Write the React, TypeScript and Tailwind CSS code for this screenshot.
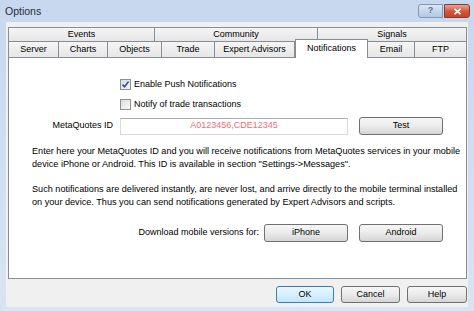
import type { ReactNode } from "react";

const TOP_ROW = [
  { label: "Events", w: "w-[147px]" },
  { label: "Community", w: "w-[163px]" },
  { label: "Signals", w: "w-[149px]" },
];

const BOTTOM_ROW = [
  { label: "Server", w: "w-[51px]" },
  { label: "Charts", w: "w-[49px]" },
  { label: "Objects", w: "w-[54px]" },
  { label: "Trade", w: "w-[53px]" },
  { label: "Expert Advisors", w: "w-[80px]" },
  { label: "Notifications", w: "w-[73px]", active: true },
  { label: "Email", w: "w-[47px]" },
  { label: "FTP", w: "w-[52px]" },
];

function Button({
  children,
  className = "",
  focused = false,
}: {
  children: ReactNode;
  className?: string;
  focused?: boolean;
}) {
  return (
    <button
      type="button"
      className={
        "flex items-center justify-center rounded-[3px] border text-[9px] text-black " +
        (focused
          ? "border-[#3c7fb1] bg-linear-to-b from-[#eaf6fd] via-[#d9f0fc] to-[#bee6fd] "
          : "border-[#707070] bg-linear-to-b from-[#f6f6f6] via-[#ebebeb] to-[#d5d5d5] ") +
        className
      }
    >
      {children}
    </button>
  );
}

function Checkbox({ checked }: { checked?: boolean }) {
  return (
    <span
      className={
        "flex h-[11px] w-[11px] items-center justify-center border border-[#8e8f8f] bg-linear-to-br " +
        (checked ? "from-[#cfdcef] to-[#f4f8fd]" : "from-[#dcdcdc] to-[#fbfbfb]")
      }
    >
      {checked ? (
        <svg viewBox="0 0 9 9" className="h-[9px] w-[9px]">
          <path
            d="M1.5 4.6 L3.6 6.8 L7.6 1.6"
            fill="none"
            stroke="#3c4f8a"
            strokeWidth="1.6"
          />
        </svg>
      ) : null}
    </span>
  );
}

export default function App() {
  return (
    <div className="flex h-[311px] w-[474px] flex-col bg-linear-to-b from-[#c7d8ee] to-[#d8e4f3] font-['Liberation_Sans',Arial,sans-serif] text-[9px] text-black">
      {/* title bar */}
      <div className="flex h-[22px] items-start pl-[5px]">
        <span className="mt-[4px] text-[10.5px] text-[#1e2c40]">Options</span>
        <div className="flex-1" />
        <div className="mt-[4px] mr-[4px] flex gap-[1px]">
          <div className="flex h-[14px] w-[25px] items-center justify-center rounded-l-[3px] border border-[#7f97b6] bg-linear-to-b from-[#dbe6f3] to-[#b3c8e2] text-[9px] font-bold text-[#5a6f8e]">
            ?
          </div>
          <div className="flex h-[14px] w-[26px] items-center justify-center rounded-r-[3px] border border-[#8d3a2e] bg-linear-to-b from-[#e8a393] via-[#d2593f] to-[#c4432b]">
            <svg viewBox="0 0 10 8" className="h-[7px] w-[9px]">
              <path d="M1.5 1 L8.5 7 M8.5 1 L1.5 7" stroke="#fff" strokeWidth="2" />
            </svg>
          </div>
        </div>
      </div>

      {/* dialog body */}
      <div className="mx-[6px] mb-[4px] flex flex-1 flex-col bg-[#f0f0f0] pt-[5px] pl-[2px]">
        {/* tabs */}
        <div className="flex h-[14px]">
          {TOP_ROW.map((t, i) => (
            <div
              key={t.label}
              className={
                "flex items-center justify-center border-t border-r border-[#898c95] bg-linear-to-b from-[#f5f5f5] to-[#e6e6e6] " +
                (i === 0 ? "border-l " : "") +
                t.w
              }
            >
              {t.label}
            </div>
          ))}
        </div>
        <div className="flex h-[16px] items-end">
          {BOTTOM_ROW.map((t, i) =>
            t.active ? (
              <div
                key={t.label}
                className={
                  "relative z-10 -mb-px flex h-[19px] items-center justify-center border-x border-t border-[#898c95] bg-white pb-[1px] " +
                  t.w
                }
              >
                {t.label}
              </div>
            ) : (
              <div
                key={t.label}
                className={
                  "flex h-[16px] items-center justify-center border-t border-r border-[#898c95] bg-linear-to-b from-[#f5f5f5] to-[#e6e6e6] " +
                  (i === 0 ? "border-l " : "") +
                  t.w
                }
              >
                {t.label}
              </div>
            ),
          )}
        </div>

        {/* panel */}
        <div className="flex h-[222px] w-[459px] flex-col border border-[#898c95] bg-white pl-[23px] pr-[23px]">
          <div className="mt-[20px] ml-[88px] flex h-[13px] items-center gap-[3px]">
            <Checkbox checked />
            <span>Enable Push Notifications</span>
          </div>
          <div className="mt-[7px] ml-[88px] flex h-[13px] items-center gap-[3px]">
            <Checkbox />
            <span>Notify of trade transactions</span>
          </div>
          <div className="mt-[6px] flex h-[18px] items-center">
            <span className="w-[81px] text-right">MetaQuotes ID</span>
            <div className="ml-[7px] flex h-[17px] w-[228px] items-center justify-center border border-[#d5dae0] border-t-[#abadb3] text-[#ee6f74]">
              A0123456,CDE12345
            </div>
            <Button className="ml-[11px] h-[18px] w-[84px]">Test</Button>
          </div>
          <p className="mt-[10px] text-[9.15px] leading-[13px]">
            <span className="block whitespace-nowrap">
              Enter here your MetaQuotes ID and you will receive notifications from MetaQuotes services in your mobile
            </span>
            <span className="block whitespace-nowrap">
              device iPhone or Android. This ID is available in section "Settings-&gt;Messages".
            </span>
          </p>
          <p className="mt-[12px] text-[9.15px] leading-[13px]">
            <span className="block whitespace-nowrap">
              Such notifications are delivered instantly, are never lost, and arrive directly to the mobile terminal installed
            </span>
            <span className="block whitespace-nowrap">
              on your device. Thus you can send notifications generated by Expert Advisors and scripts.
            </span>
          </p>
          <div className="mt-[15px] flex h-[18px] items-center justify-end">
            <span>Download mobile versions for:</span>
            <Button className="ml-[5px] h-[18px] w-[84px]">iPhone</Button>
            <Button className="ml-[11px] h-[18px] w-[84px]">Android</Button>
          </div>
        </div>

        {/* dialog buttons */}
        <div className="mt-[7px] flex w-[459px] justify-end gap-[7px]">
          <Button focused className="h-[17px] w-[58px]">
            OK
          </Button>
          <Button className="h-[17px] w-[59px]">Cancel</Button>
          <Button className="h-[17px] w-[60px]">Help</Button>
        </div>
      </div>
    </div>
  );
}
